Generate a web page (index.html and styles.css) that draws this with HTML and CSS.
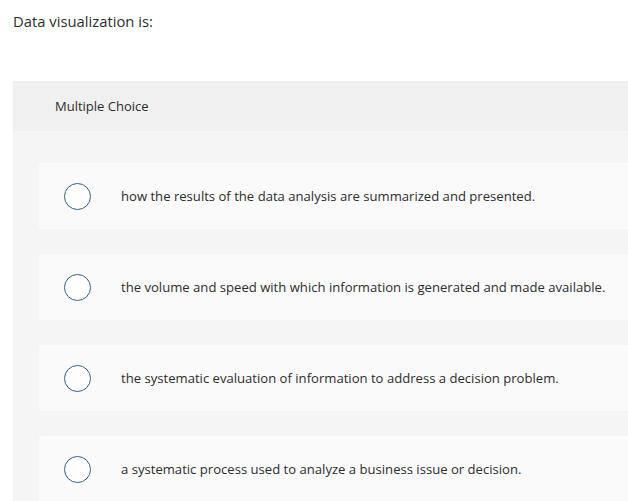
FILE: index.html
```html
<!DOCTYPE html>
<html>
<head>
<meta charset="utf-8">
<link rel="stylesheet" href="styles.css">
</head>
<body>
<div class="page">
  <p class="prompt">Data visualization is:</p>
  <section class="question">
    <header class="qhead">Multiple Choice</header>
    <div class="choices">
      <label class="choice"><span class="radio"></span><span class="text">how the results of the data analysis are summarized and presented.</span></label>
      <label class="choice"><span class="radio"></span><span class="text">the volume and speed with which information is generated and made available.</span></label>
      <label class="choice"><span class="radio"></span><span class="text">the systematic evaluation of information to address a decision problem.</span></label>
      <label class="choice"><span class="radio"></span><span class="text">a systematic process used to analyze a business issue or decision.</span></label>
    </div>
  </section>
</div>
</body>
</html>
```
FILE: styles.css
```css
html, body {
  margin: 0;
  padding: 0;
  background: #ffffff;
}
body {
  font-family: "Open Sans", "Liberation Sans", sans-serif;
  color: #2d2d2d;
  overflow: hidden;
}
.page {
  padding: 11px 0 0 13px;
}
.prompt {
  margin: 0;
  font-size: 14.8px;
  line-height: 20px;
}
.question {
  margin-top: 50px;
  background: #f5f5f5;
}
.qhead {
  background: #f0f0f0;
  height: 50px;
  display: flex;
  align-items: center;
  padding-left: 42px;
  font-size: 13px;
}
.choices {
  padding: 32px 0 0 26px;
  display: flex;
  flex-direction: column;
  gap: 25px;
}
.choice {
  background: #fafafa;
  border-radius: 3px 0 0 3px;
  height: 66px;
  display: flex;
  align-items: center;
  padding-left: 25px;
}
.radio {
  width: 25px;
  height: 25px;
  border: 1.5px solid #2f5f8e;
  border-radius: 50%;
  background: #ffffff;
  flex: none;
}
.text {
  margin-left: 30px;
  font-size: 13.1px;
}
```
